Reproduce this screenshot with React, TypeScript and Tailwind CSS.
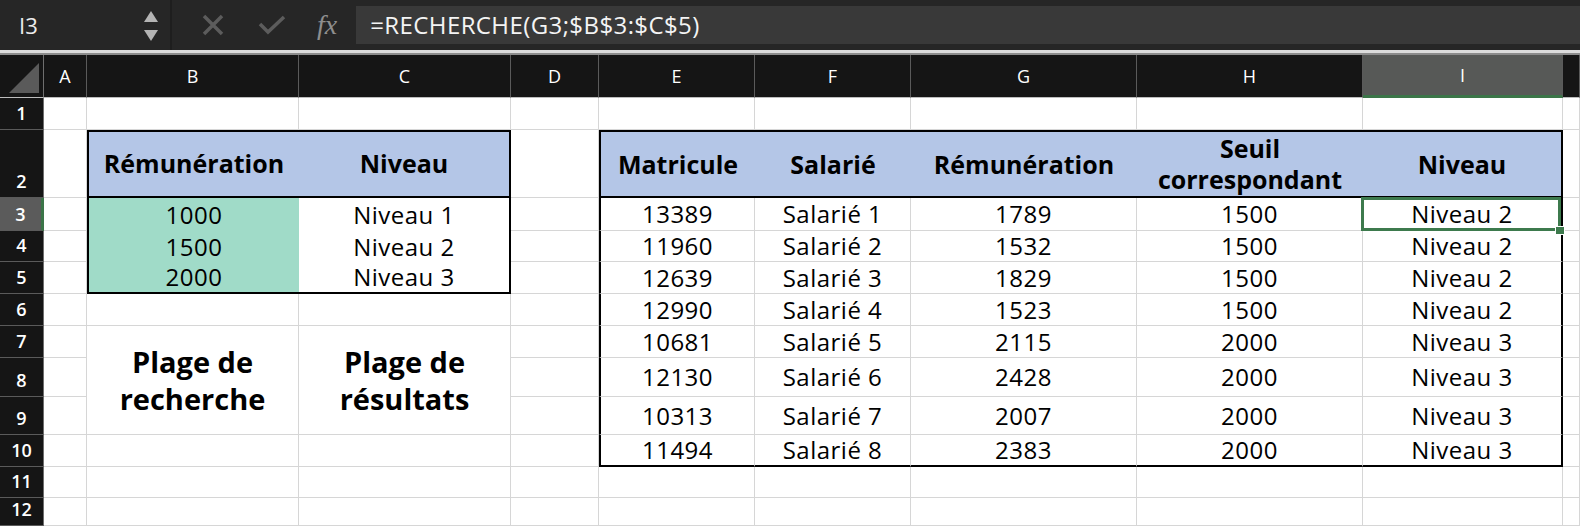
import React from 'react';
import clsx from 'clsx';

const COLS = ['A', 'B', 'C', 'D', 'E', 'F', 'G', 'H', 'I', 'J'];

const lookup = [
  ['1000', 'Niveau 1'],
  ['1500', 'Niveau 2'],
  ['2000', 'Niveau 3'],
];

const headers = ['Matricule', 'Salarié', 'Rémunération', 'Seuil correspondant', 'Niveau'];

const employees = [
  ['13389', 'Salarié 1', '1789', '1500', 'Niveau 2'],
  ['11960', 'Salarié 2', '1532', '1500', 'Niveau 2'],
  ['12639', 'Salarié 3', '1829', '1500', 'Niveau 2'],
  ['12990', 'Salarié 4', '1523', '1500', 'Niveau 2'],
  ['10681', 'Salarié 5', '2115', '2000', 'Niveau 3'],
  ['12130', 'Salarié 6', '2428', '2000', 'Niveau 3'],
  ['10313', 'Salarié 7', '2007', '2000', 'Niveau 3'],
  ['11494', 'Salarié 8', '2383', '2000', 'Niveau 3'],
];

const grid = 'border-r border-b border-[#d6d6d6]';
const center = 'flex items-center justify-center text-center';

function FormulaBar() {
  return (
    <div className="h-[50px] bg-[#262626] flex items-center">
      <div className="w-[170px] h-full flex items-center justify-between pl-[19px] pr-[11px]">
        <span className="text-[22px] text-[#ececec]">I3</span>
        <svg width="16" height="36" viewBox="0 0 16 36">
          <polygon points="8,4 15,15 1,15" fill="#b4b4b4" />
          <polygon points="1,23 15,23 8,34" fill="#b4b4b4" />
        </svg>
      </div>
      <div className="w-[2px] h-full bg-[#1e1e1e]" />
      <svg className="ml-[30px]" width="22" height="22" viewBox="0 0 22 22">
        <path d="M2 2 L20 20 M20 2 L2 20" stroke="#5c5c5c" strokeWidth="3.5" />
      </svg>
      <svg className="ml-[34px]" width="28" height="22" viewBox="0 0 28 22">
        <path d="M2 10 L10 18 L26 3" stroke="#5c5c5c" strokeWidth="3.5" fill="none" />
      </svg>
      <span className="ml-[31px] font-['Liberation_Serif',serif] italic text-[28px] text-[#8e8e8e] leading-none">
        fx
      </span>
      <div className="ml-[19px] flex-1 h-[38px] bg-[#393939] flex items-center pl-[14px]">
        <span className="text-[24px] tracking-[0.4px] text-[#f4f4f4]">=RECHERCHE(G3;$B$3:$C$5)</span>
      </div>
    </div>
  );
}

function Corner() {
  return (
    <div className="bg-[#151515] border-r border-r-[#6e6e6e] border-b border-b-[#bdbdbd] flex items-end justify-end pr-[4px] pb-[4px]">
      <svg width="30" height="30" viewBox="0 0 30 30">
        <polygon points="30,0 30,30 0,30" fill="#5a5a5a" />
      </svg>
    </div>
  );
}

function ColHead({ label }: { label: string }) {
  const active = label === 'I';
  return (
    <div
      className={clsx(
        'flex items-center justify-center text-[18px] text-white border-r border-r-[#5a5a5a]',
        active ? 'bg-[#575957] border-b-[3px] border-b-[#3b7548]' : 'bg-[#151515] border-b border-b-[#bdbdbd]'
      )}
    >
      {label === 'J' ? '' : label}
    </div>
  );
}

function RowHead({ n }: { n: number }) {
  const active = n === 3;
  return (
    <div
      className={clsx(
        'flex items-end justify-center pb-[2px] text-[18px] font-semibold text-white border-b border-b-[#5a5a5a]',
        active ? 'bg-[#5b5b5b] border-r-[3px] border-r-[#3b7548]' : 'bg-[#151515] border-r border-r-[#6e6e6e]'
      )}
    >
      {n}
    </div>
  );
}

function renderCell(r: number, ci: number) {
  const col = COLS[ci];
  const key = col + r;

  // lookup table B2:C5
  if (r === 2 && col === 'B')
    return (
      <div key={key} className={clsx(center, 'bg-[#b4c6e7] font-bold text-[25px] border-l-2 border-t-2 border-b-2 border-black')}>
        Rémunération
      </div>
    );
  if (r === 2 && col === 'C')
    return (
      <div key={key} className={clsx(center, 'bg-[#b4c6e7] font-bold text-[25px] border-r-2 border-t-2 border-b-2 border-black')}>
        Niveau
      </div>
    );
  if (r >= 3 && r <= 5 && col === 'B')
    return (
      <div key={key} className={clsx(center, 'bg-[#a0dbc8] tracking-[0.5px] border-l-2 border-black', r === 5 && 'border-b-2')}>
        {lookup[r - 3][0]}
      </div>
    );
  if (r >= 3 && r <= 5 && col === 'C')
    return (
      <div key={key} className={clsx(center, 'bg-white tracking-[0.5px] border-r-2 border-black', r === 5 && 'border-b-2')}>
        {lookup[r - 3][1]}
      </div>
    );

  // merged captions B7:B9, C7:C9
  if (r === 7 && (col === 'B' || col === 'C'))
    return (
      <div key={key} className={clsx(center, grid, 'row-span-3 font-bold text-[29px] leading-[37px]')}>
        {col === 'B' ? (
          <span>
            Plage de
            <br />
            recherche
          </span>
        ) : (
          <span>
            Plage de
            <br />
            résultats
          </span>
        )}
      </div>
    );
  if ((r === 8 || r === 9) && (col === 'B' || col === 'C')) return null;

  // employee table E2:I10
  if (ci >= 4 && ci <= 8 && r >= 2 && r <= 10) {
    const j = ci - 4;
    if (r === 2)
      return (
        <div
          key={key}
          className={clsx(
            center,
            'bg-[#b4c6e7] font-bold text-[25px] leading-[31px] border-t-2 border-b-2 border-black',
            j === 0 && 'border-l-2',
            j === 4 && 'border-r-2'
          )}
        >
          {j === 3 ? (
            <span>
              Seuil
              <br />
              correspondant
            </span>
          ) : (
            headers[j]
          )}
        </div>
      );
    const selected = r === 3 && j === 4;
    return (
      <div
        key={key}
        className={clsx(
          center,
          grid,
          'tracking-[0.5px]',
          j === 0 && 'border-l-2 border-l-black',
          j === 4 && 'border-r-2 border-r-black',
          r === 10 && 'border-b-2 border-b-black',
          selected && 'relative'
        )}
      >
        {employees[r - 3][j]}
        {selected && (
          <div className="absolute -left-[2px] -top-[1px] right-0 -bottom-[1px] z-10 border-[3px] border-[#3d7a4d]">
            <div className="absolute -right-[7px] -bottom-[7px] w-[10px] h-[9px] bg-[#3d7a4d] border border-white" />
          </div>
        )}
      </div>
    );
  }

  return <div key={key} className={grid} />;
}

export default function App() {
  const cells: React.ReactNode[] = [<Corner key="corner" />];
  COLS.forEach((c) => cells.push(<ColHead key={'h' + c} label={c} />));
  for (let r = 1; r <= 12; r++) {
    cells.push(<RowHead key={'r' + r} n={r} />);
    COLS.forEach((_, ci) => {
      const node = renderCell(r, ci);
      if (node) cells.push(node);
    });
  }

  return (
    <div className="w-[1580px] h-[526px] overflow-hidden bg-white font-['Open_Sans','Noto_Sans',sans-serif] text-[24px] text-black">
      <FormulaBar />
      <div className="h-[3px] bg-[#dcdcdc]" />
      <div className="h-[2px] bg-[#8c8c8c]" />
      <div className="grid grid-cols-[44px_43px_212px_212px_88px_156px_156px_226px_226px_200px_1fr] grid-rows-[43px_32px_68px_33px_31px_32px_32px_32px_39px_38px_32px_31px_28px]">
        {cells}
      </div>
    </div>
  );
}
